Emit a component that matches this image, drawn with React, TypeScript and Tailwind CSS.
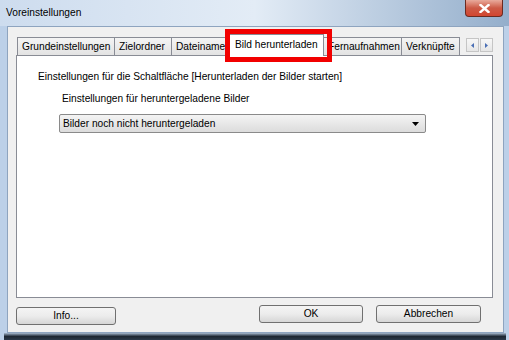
import React from "react";

const tabs = [
  { label: "Grundeinstellungen", w: "w-[98px]" },
  { label: "Zielordner", w: "w-[58px]" },
  { label: "Dateiname", w: "w-[57px]" },
];

const tabsRight = [
  { label: "Fernaufnahmen", w: "w-[79px]" },
  { label: "Verknüpfte", w: "w-[59px]" },
];

const Tab: React.FC<{ label: string; w: string }> = ({ label, w }) => (
  <div
    className={`${w} h-[18px] shrink-0 overflow-hidden whitespace-nowrap border border-b-0 border-[#898c95] -ml-px first:ml-0 bg-gradient-to-b from-[#f4f4f4] to-[#e3e3e3] pl-[4px] pt-[2px] text-[10.2px] leading-[13px] text-black`}
  >
    {label}
  </div>
);

const Button: React.FC<{ label: string; w: string; className?: string }> = ({ label, w, className }) => (
  <button
    className={`${w} h-[18px] rounded-[3px] border border-[#707070] bg-gradient-to-b from-[#f4f4f4] via-[#ececec] to-[#d6d6d6] text-[10.2px] leading-[16px] text-black ${className ?? ""}`}
  >
    {label}
  </button>
);

export default function App() {
  return (
    <div
      className="relative w-[509px] h-[340px] overflow-hidden flex flex-col bg-[#bcd0e8]"
      style={{ fontFamily: '"Liberation Sans", Arial, sans-serif' }}
    >
      {/* title bar */}
      <div className="h-[26px] shrink-0 flex items-center pl-[6px] bg-gradient-to-r from-[#cddcee] via-[#e3ecf6] to-[#94aecb]">
        <span className="text-[10.2px] text-black">Voreinstellungen</span>
      </div>
      <div className="absolute right-[6px] top-0 w-[38px] h-[17px] rounded-b-[4px] border border-t-0 border-[#6b2a20] bg-gradient-to-b from-[#e8aa9c] via-[#cc5a46] to-[#d2452f] flex items-center justify-center">
        <svg width="11" height="9" viewBox="0 0 11 9">
          <path d="M1.5 1 L9.5 8 M9.5 1 L1.5 8" stroke="#ffffff" strokeWidth="2.4" strokeLinecap="square" />
        </svg>
      </div>

      {/* body */}
      <div className="flex-1 flex ml-[7px] mr-[5px]">
        <div className="flex-1 flex flex-col bg-[#f0f0f0] border border-[#8ea4bf] pt-[10px] pl-[8px] pr-[10px]">
          {/* tab strip */}
          <div className="relative flex items-end h-[18px] pl-px">
            {tabs.map((t) => (
              <Tab key={t.label} label={t.label} w={t.w} />
            ))}
            <div className="relative z-10 w-[97px] h-[22px] -mb-px -ml-px shrink-0 border border-b-0 border-[#898c95] bg-white pl-[7px] pt-[3px] text-[10.2px] leading-[13px] text-black whitespace-nowrap">
              Bild herunterladen
            </div>
            {tabsRight.map((t) => (
              <Tab key={t.label} label={t.label} w={t.w} />
            ))}
            <div className="flex ml-auto mb-[3px] gap-px">
              {["M4 1 L1 3.5 L4 6 Z", "M1 1 L4 3.5 L1 6 Z"].map((d) => (
                <div
                  key={d}
                  className="w-[13px] h-[14px] border border-[#c5c5c5] bg-gradient-to-b from-[#f7f7f7] to-[#e6e6e6] flex items-center justify-center"
                >
                  <svg width="5" height="7" viewBox="0 0 5 7">
                    <path d={d} fill="#4a6fb5" />
                  </svg>
                </div>
              ))}
            </div>
          </div>

          {/* panel */}
          <div className="h-[243px] border border-[#898c95] bg-white pt-[14px] pl-[21px] text-[10.2px] text-black">
            <div className="leading-[14px]">Einstellungen für die Schaltfläche [Herunterladen der Bilder starten]</div>
            <div className="mt-[8px] pl-[24px] leading-[14px]">Einstellungen für heruntergeladene Bilder</div>
            <div className="mt-[8px] ml-[21px] w-[367px] h-[19px] rounded-[2px] border border-[#8a8a8a] bg-gradient-to-b from-[#f4f4f4] to-[#dcdcdc] flex items-center pl-[3px] pr-[6px]">
              <span className="flex-1">Bilder noch nicht heruntergeladen</span>
              <svg width="7" height="4" viewBox="0 0 7 4">
                <path d="M0 0 L7 0 L3.5 4 Z" fill="#000" />
              </svg>
            </div>
          </div>

          {/* buttons */}
          <div className="flex items-start mt-[7px]">
            <Button label="Info..." w="w-[100px]" className="mt-[2px]" />
            <Button label="OK" w="w-[104px]" className="ml-[143px]" />
            <Button label="Abbrechen" w="w-[105px]" className="ml-[13px]" />
          </div>
        </div>
      </div>
      {/* bottom frame */}
      <div className="h-[7px] shrink-0 ml-[4px] mr-[3px] bg-gradient-to-b from-[#a9bcd2] via-[#1d2733] to-[#2c3a4a]" />

      {/* annotation box */}
      <div className="absolute left-[225px] top-[29px] w-[107px] h-[33px] border-[5px] border-[#f20000] z-20" />
    </div>
  );
}
